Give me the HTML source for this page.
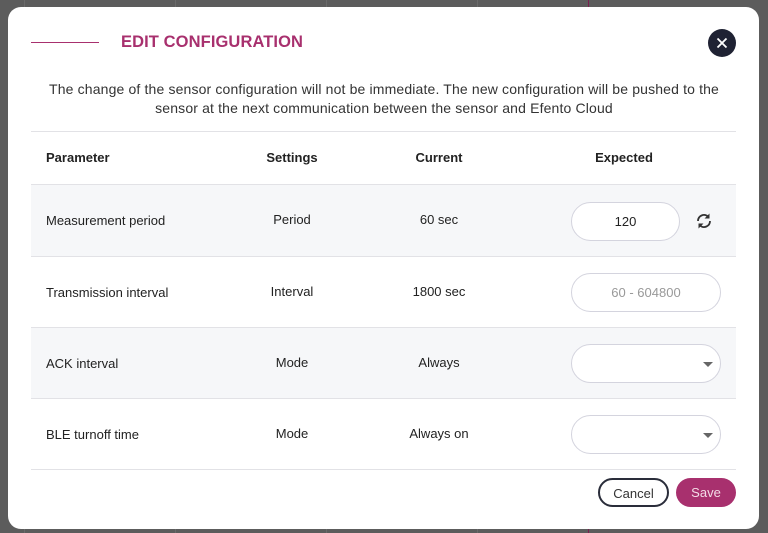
<!DOCTYPE html>
<html><head><style>
*{box-sizing:border-box;margin:0;padding:0}
body{width:768px;height:533px;background:#5c5c5c;font-family:"Liberation Sans",sans-serif;position:relative;overflow:hidden}
.bgl{position:absolute;top:0;width:1px;height:533px;background:#6a6a6a}
.modal{position:absolute;left:8px;top:7px;width:751px;height:522px;background:#fff;border-radius:13px}
.line{position:absolute;left:23px;top:35px;width:68px;height:1px;background:#a8306e}
.title{position:absolute;left:113px;top:26px;font-size:16.5px;font-weight:bold;color:#a8306e;letter-spacing:0.1px}
.close{position:absolute;left:700px;top:22px;width:28px;height:28px;border-radius:50%;background:#1f2233}
.desc{position:absolute;left:40px;top:73px;width:672px;text-align:center;font-size:14px;line-height:19px;color:#333;letter-spacing:0.15px}
.tbl{position:absolute;left:23px;top:124px;width:705px}
.row{position:absolute;left:0;width:705px;border-top:1px solid #e2e2e6;font-size:13px;color:#222}
.row.g{background:#f6f7f9}
.row span{position:absolute}
.c1{left:15px}.c2{left:261px;width:0}.c3{left:408px;width:0}
.c2 b,.c3 b{font-weight:normal;position:absolute;transform:translateX(-50%);white-space:nowrap}
.inp{position:absolute;left:540px;height:39px;border:1px solid #d4d4de;border-radius:20px;background:#fff;font-size:13px;text-align:center;line-height:37px}
.arrow{position:absolute;right:7px;top:17px;border-left:5px solid transparent;border-right:5px solid transparent;border-top:5px solid #666}
.btn{position:absolute;top:471px;height:29px;border-radius:15px;font-size:13px;text-align:center;line-height:27px}
</style></head><body>
<div class="bgl" style="left:24px"></div><div class="bgl" style="left:175px"></div><div class="bgl" style="left:326px"></div><div class="bgl" style="left:477px"></div><div class="bgl" style="left:588px;background:#7a2050"></div>
<div class="modal">
<div class="line"></div>
<div class="title">EDIT CONFIGURATION</div>
<div class="close"><svg width="28" height="28"><path d="M9.5 9.5L18.5 18.5M18.5 9.5L9.5 18.5" stroke="#fff" stroke-width="1.8"/></svg></div>
<div class="desc">The change of the sensor configuration will not be immediate. The new configuration will be pushed to the sensor at the next communication between the sensor and Efento Cloud</div>
<div class="tbl">
<div class="row" style="top:0;height:53px;font-weight:bold"><span class="c1" style="top:18px">Parameter</span><span class="c2" style="top:18px"><b style="font-weight:bold">Settings</b></span><span class="c3" style="top:18px"><b style="font-weight:bold">Current</b></span><span style="left:593px;top:18px;width:0"><b style="font-weight:bold;position:absolute;transform:translateX(-50%)">Expected</b></span></div>
<div class="row g" style="top:53px;height:72px"><span class="c1" style="top:28px">Measurement period</span><span class="c2" style="top:27px"><b>Period</b></span><span class="c3" style="top:27px"><b>60 sec</b></span>
<div class="inp" style="top:17px;width:109px">120</div>
<svg style="position:absolute;left:664px;top:27px" width="18" height="18" viewBox="0 0 18 18"><path d="M3 9a6 6 0 0 1 10-4.5M15 9a6 6 0 0 1-10 4.5" fill="none" stroke="#333" stroke-width="1.8"/><path d="M14.5 1.5v5h-5z M3.5 16.5v-5h5z" fill="#333"/></svg></div>
<div class="row" style="top:125px;height:71px"><span class="c1" style="top:28px">Transmission interval</span><span class="c2" style="top:27px"><b>Interval</b></span><span class="c3" style="top:27px"><b>1800 sec</b></span>
<div class="inp" style="top:16px;width:150px;color:#999">60 - 604800</div></div>
<div class="row g" style="top:196px;height:71px"><span class="c1" style="top:28px">ACK interval</span><span class="c2" style="top:27px"><b>Mode</b></span><span class="c3" style="top:27px"><b>Always</b></span>
<div class="inp" style="top:16px;width:150px"><div class="arrow"></div></div></div>
<div class="row" style="top:267px;height:72px;border-bottom:1px solid #e2e2e6"><span class="c1" style="top:28px">BLE turnoff time</span><span class="c2" style="top:27px"><b>Mode</b></span><span class="c3" style="top:27px"><b>Always on</b></span>
<div class="inp" style="top:16px;width:150px"><div class="arrow"></div></div></div>
</div>
<div class="btn" style="left:590px;width:71px;border:2px solid #2a2d3a;color:#333">Cancel</div>
<div class="btn" style="left:668px;width:60px;background:#a8306e;color:#f3dbe7;line-height:29px">Save</div>
</div>
</body></html>
